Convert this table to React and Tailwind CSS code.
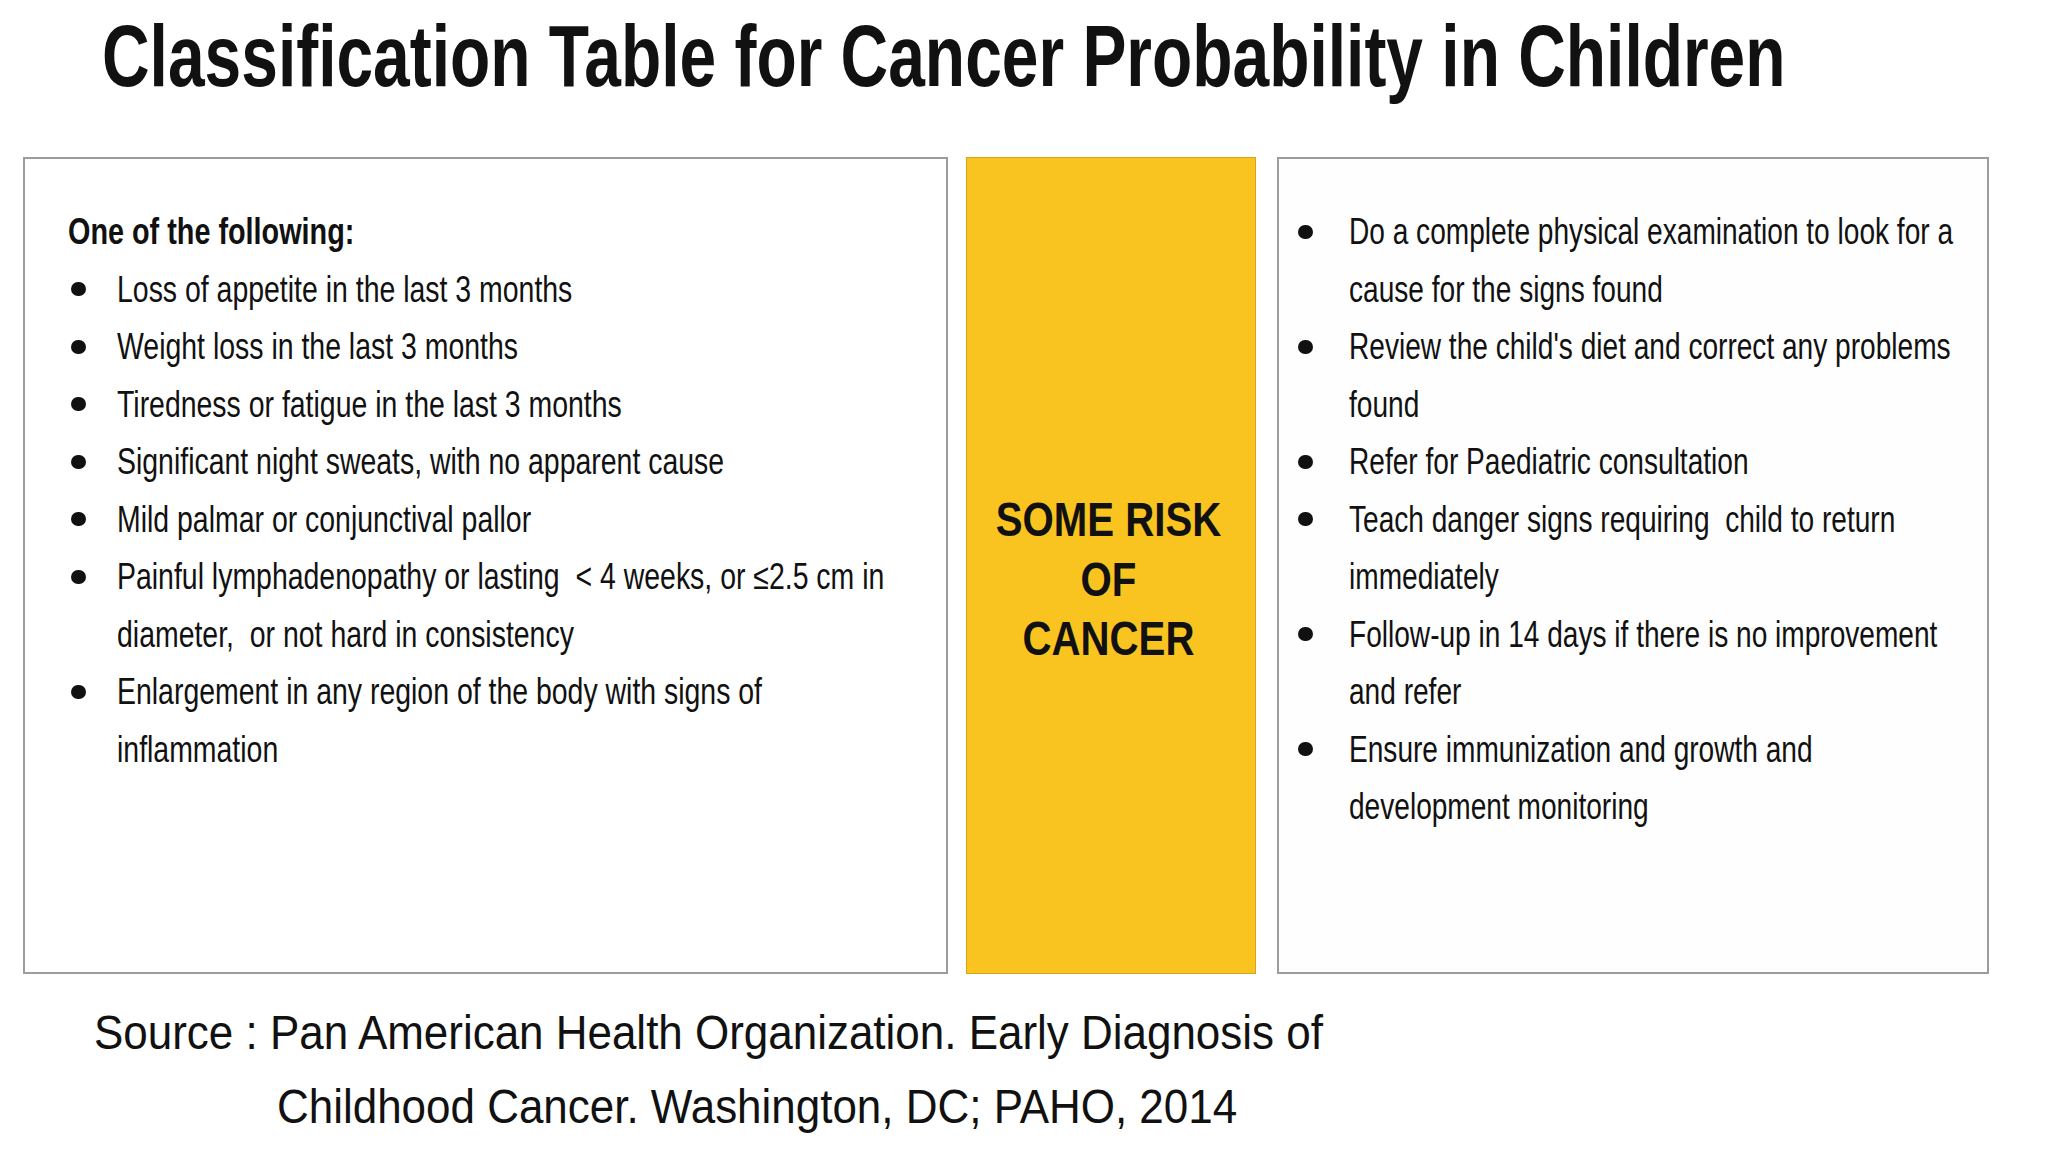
const SIGNS = [
  ['Loss of appetite in the last 3 months'],
  ['Weight loss in the last 3 months'],
  ['Tiredness or fatigue in the last 3 months'],
  ['Significant night sweats, with no apparent cause'],
  ['Mild palmar or conjunctival pallor'],
  ['Painful lymphadenopathy or lasting  < 4 weeks, or ≤2.5 cm in', 'diameter,  or not hard in consistency'],
  ['Enlargement in any region of the body with signs of', 'inflammation'],
]

const ACTIONS = [
  ['Do a complete physical examination to look for a', 'cause for the signs found'],
  ["Review the child's diet and correct any problems", 'found'],
  ['Refer for Paediatric consultation'],
  ['Teach danger signs requiring  child to return', 'immediately'],
  ['Follow-up in 14 days if there is no improvement', 'and refer'],
  ['Ensure immunization and growth and', 'development monitoring'],
]

function Bullet({ lines, gap, squeeze }) {
  return (
    <li className="flex items-start">
      <span className="flex h-[57.5px] w-[15px] shrink-0 items-center">
        <span className="h-[14px] w-[15px] rounded-full bg-[#111]" />
      </span>
      <span className={gap}>
        {lines.map((l, i) => (
          <span key={i} className={`block origin-left whitespace-pre ${squeeze}`}>
            {l}
          </span>
        ))}
      </span>
    </li>
  )
}

export default function App() {
  return (
    <div className="h-[1152px] w-[2048px] overflow-hidden bg-white text-[#111] font-['Liberation_Sans',Arial,sans-serif]">
      <div className="h-[157px] pl-[102px] pt-[12px]">
        <h1 className="origin-left scale-x-[0.749] whitespace-nowrap text-[88px] font-bold leading-[88px]">
          Classification Table for Cancer Probability in Children
        </h1>
      </div>

      <div className="flex h-[817px] pl-[23px]">
        <div className="w-[925px] border-2 border-[#9c9c9c] bg-white pt-[44px] text-[36px] leading-[57.5px]">
          <p className="origin-left translate-x-[43px] scale-x-[0.8] whitespace-nowrap font-bold">
            One of the following:
          </p>
          <ul className="pl-[46px]">
            {SIGNS.map((s, i) => (
              <Bullet key={i} lines={s} gap="pl-[31px]" squeeze="scale-x-[0.79]" />
            ))}
          </ul>
        </div>

        <div className="ml-[18px] flex w-[290px] items-center justify-center border border-[#d4a514] bg-[#f9c320] pt-[28px]">
          <p className="-translate-x-[3px] scale-x-[0.82] text-center text-[49px] font-bold leading-[59.5px]">
            SOME RISK
            <br />
            OF
            <br />
            CANCER
          </p>
        </div>

        <div className="ml-[21px] w-[712px] border-2 border-[#9c9c9c] bg-[#fefefe] pt-[44px] text-[36px] leading-[57.5px]">
          <ul className="pl-[19px]">
            {ACTIONS.map((s, i) => (
              <Bullet key={i} lines={s} gap="pl-[36px]" squeeze="scale-x-[0.78]" />
            ))}
          </ul>
        </div>
      </div>

      <div className="mt-[21px] text-[49px] leading-[74px]">
        <div className="pl-[94px]">
          <p className="origin-left scale-x-[0.897] whitespace-nowrap">
            Source : Pan American Health Organization. Early Diagnosis of
          </p>
        </div>
        <div className="pl-[277px]">
          <p className="origin-left scale-x-[0.897] whitespace-nowrap">
            Childhood Cancer. Washington, DC; PAHO, 2014
          </p>
        </div>
      </div>
    </div>
  )
}
